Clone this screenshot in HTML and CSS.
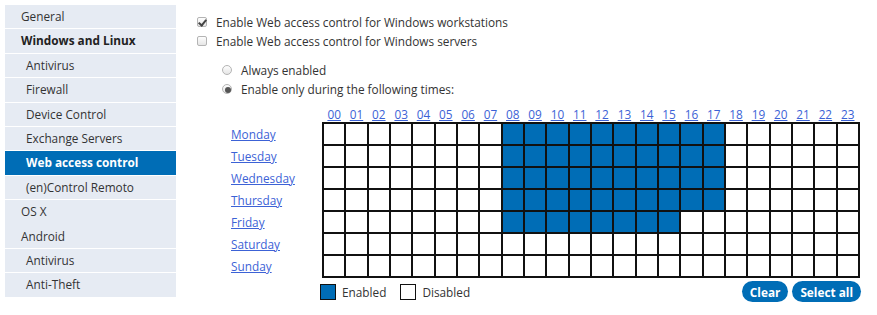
FILE: index.html
```html
<!DOCTYPE html>
<html>
<head>
<meta charset="utf-8">
<link rel="stylesheet" href="styles.css">
</head>
<body>
<div class="page">
  <nav class="sidebar">
    <div class="nav-item top">General</div>
    <div class="nav-item top bold">Windows and Linux</div>
    <div class="nav-item sub">Antivirus</div>
    <div class="nav-item sub">Firewall</div>
    <div class="nav-item sub">Device Control</div>
    <div class="nav-item sub">Exchange Servers</div>
    <div class="nav-item sub bold active">Web access control</div>
    <div class="nav-item sub">(en)Control Remoto</div>
    <div class="nav-item top nosep">OS X</div>
    <div class="nav-item top">Android</div>
    <div class="nav-item sub">Antivirus</div>
    <div class="nav-item sub last">Anti-Theft</div>
  </nav>
  <main class="content">
    <label class="opt"><input type="checkbox" class="chk" checked><span>Enable Web access control for Windows workstations</span></label>
    <label class="opt"><input type="checkbox" class="chk"><span>Enable Web access control for Windows servers</span></label>
    <div class="radios">
      <label class="opt"><input type="radio" name="mode" class="rad"><span>Always enabled</span></label>
      <label class="opt"><input type="radio" name="mode" class="rad" checked><span>Enable only during the following times:</span></label>
    </div>
    <div class="schedule">
      <table class="grid" id="grid">
        <thead><tr id="hours"><th class="daycol"></th></tr></thead>
        <tbody id="days"></tbody>
      </table>
      <div class="footer">
        <div class="legend">
          <span class="swatch on"></span><span class="leg-text">Enabled</span>
          <span class="swatch"></span><span class="leg-text">Disabled</span>
        </div>
        <div class="buttons">
          <button class="btn">Clear</button>
          <button class="btn">Select all</button>
        </div>
      </div>
    </div>
  </main>
</div>
<script>
(function(){
  var hours = document.getElementById('hours');
  for (var h = 0; h < 24; h++) {
    var th = document.createElement('th');
    th.className = 'hour';
    var a = document.createElement('a');
    a.href = '#';
    a.textContent = (h < 10 ? '0' : '') + h;
    th.appendChild(a);
    hours.appendChild(th);
  }
  var days = ['Monday','Tuesday','Wednesday','Thursday','Friday','Saturday','Sunday'];
  var ends = [17,17,17,17,15,-1,-1];
  var body = document.getElementById('days');
  days.forEach(function(d, i){
    var tr = document.createElement('tr');
    var td = document.createElement('td');
    td.className = 'daycol';
    var a = document.createElement('a');
    a.href = '#';
    a.textContent = d;
    td.appendChild(a);
    tr.appendChild(td);
    for (var h = 0; h < 24; h++) {
      var c = document.createElement('td');
      c.className = 'cell' + (h >= 8 && h <= ends[i] ? ' on' : '');
      tr.appendChild(c);
    }
    body.appendChild(tr);
  });
})();
</script>
</body>
</html>
```
FILE: styles.css
```css
html, body {
  margin: 0;
  padding: 0;
  background: #fff;
}
body {
  font-family: "Open Sans", Lato, sans-serif;
  font-size: 11.8px;
  color: #333;
}
.page {
  display: flex;
  align-items: flex-start;
}
.sidebar {
  width: 171px;
  margin: 5px 0 0 5px;
  background: #e6ebf3;
}
.nav-item {
  height: 23.4px;
  line-height: 23.4px;
  border-bottom: 1px solid #fff;
  white-space: nowrap;
}
.nav-item.top { padding-left: 16px; }
.nav-item.sub { padding-left: 21px; }
.nav-item.nosep { border-bottom-color: #e6ebf3; }
.nav-item.last { border-bottom: 0; }
.nav-item.bold { font-weight: bold; color: #222; }
.nav-item.active {
  background: #006db6;
  color: #fff;
}
.content {
  padding: 12px 0 0 21px;
  display: flex;
  flex-direction: column;
}
.opt {
  display: flex;
  align-items: center;
  height: 19px;
}
.opt span { margin-left: 9px; }
.chk, .rad {
  -webkit-appearance: none;
  appearance: none;
  margin: 0;
  width: 10px;
  height: 10px;
  border: 1px solid #b4b4b4;
  background: linear-gradient(#fdfdfd, #e6e6e6);
  position: relative;
}
.chk { border-radius: 2px; }
.rad { border-radius: 50%; }
.chk:checked::after {
  content: "";
  position: absolute;
  left: 2px;
  top: 0px;
  width: 3px;
  height: 6px;
  border: solid #444;
  border-width: 0 2px 2px 0;
  transform: rotate(40deg);
}
.rad:checked::after {
  content: "";
  position: absolute;
  left: 2px;
  top: 2px;
  width: 6px;
  height: 6px;
  border-radius: 50%;
  background: #555;
}
.radios {
  margin: 10px 0 0 25px;
  display: flex;
  flex-direction: column;
}
.schedule {
  margin: 9px 0 0 34px;
  width: 630px;
}
.grid {
  border-collapse: collapse;
  table-layout: fixed;
  width: 629px;
}
.grid a {
  color: #3c62d6;
  text-decoration: underline;
}
.grid th.daycol { width: 90px; }
.hour {
  font-weight: normal;
  height: 14px;
  padding: 0 0 1px 0;
  text-align: center;
  line-height: 13px;
  vertical-align: bottom;
}
td.daycol {
  padding: 0;
  text-align: left;
  vertical-align: middle;
}
.cell {
  border: 2px solid #111;
  height: 18px;
  padding: 0;
  background: #fff;
}
.cell.on { background: #006db6; }
tbody tr { height: 22px; }
.footer {
  display: flex;
  justify-content: space-between;
  align-items: center;
  margin-top: 3px;
  padding-left: 89px;
}
.legend {
  display: flex;
  align-items: center;
}
.swatch {
  width: 14px;
  height: 14px;
  border: 1px solid #111;
  background: #fff;
}
.swatch.on { background: #006db6; }
.leg-text { margin: 0 14px 0 6px; }
.buttons {
  display: flex;
  gap: 4px;
}
.btn {
  background: #006db6;
  color: #fff;
  border: 0;
  border-radius: 11px;
  height: 21px;
  padding: 0 8px;
  font-family: "Open Sans", Lato, sans-serif;
  font-size: 11.8px;
  font-weight: bold;
}
```
